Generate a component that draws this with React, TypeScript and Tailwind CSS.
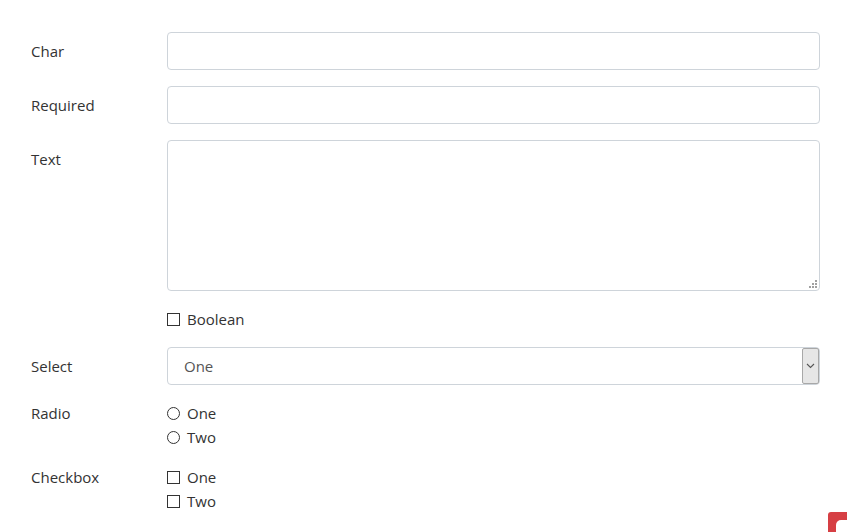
import React from 'react';

const font = { fontFamily: '"Open Sans", "Noto Sans", sans-serif' };

function Label({ children, pad = true }: { children: string; pad?: boolean }) {
  return (
    <div className={`w-[136px] shrink-0 leading-6 ${pad ? 'pt-[7px]' : ''}`}>{children}</div>
  );
}

function Box() {
  return <span className="w-[13px] h-[13px] border border-[#333] bg-white shrink-0" />;
}

function Circle() {
  return <span className="w-[13px] h-[13px] border border-[#333] rounded-full bg-white shrink-0" />;
}

function Option({ kind, children }: { kind: 'box' | 'circle'; children: string }) {
  return (
    <label className="flex items-center gap-[7px] h-6 leading-6">
      {kind === 'box' ? <Box /> : <Circle />}
      <span>{children}</span>
    </label>
  );
}

// dotted resize grip like the one in the screenshot
function Grip() {
  return (
    <svg className="absolute right-[3px] bottom-[3px]" width="9" height="9" viewBox="0 0 9 9">
      <g fill="#a0a0a0">
        <rect x="7" y="1" width="2" height="2" />
        <rect x="4" y="4" width="2" height="2" />
        <rect x="7" y="4" width="2" height="2" />
        <rect x="1" y="7" width="2" height="2" />
        <rect x="4" y="7" width="2" height="2" />
        <rect x="7" y="7" width="2" height="2" />
      </g>
    </svg>
  );
}

export default function App() {
  return (
    <div className="relative h-[532px] overflow-hidden bg-white text-[15px] text-[#333]" style={font}>
      <form className="flex flex-col gap-4 pl-[31px] pt-[32px] w-[820px]">
        <div className="flex">
          <Label>Char</Label>
          <input className="flex-1 h-[38px] border border-[#ced4da] rounded-[4px] px-3 outline-none" />
        </div>
        <div className="flex">
          <Label>Required</Label>
          <input className="flex-1 h-[38px] border border-[#ced4da] rounded-[4px] px-3 outline-none" />
        </div>
        <div className="flex">
          <Label>Text</Label>
          <div className="relative flex-1 flex">
            <textarea className="flex-1 h-[151px] border border-[#ced4da] rounded-[4px] px-3 outline-none resize-none" />
            <Grip />
          </div>
        </div>
        <div className="flex">
          <div className="w-[136px] shrink-0" />
          <Option kind="box">Boolean</Option>
        </div>
        <div className="flex">
          <Label>Select</Label>
          <div className="relative flex-1 h-[38px] border border-[#ced4da] rounded-[4px] flex items-center pl-4 text-[#555]">
            <span>One</span>
            <div className="absolute right-0 top-0 bottom-0 w-[17px] bg-[#e6e6e6] border border-[#a8a8a8] rounded-[2px] flex items-center justify-center">
              <svg width="9" height="6" viewBox="0 0 9 6" fill="none">
                <path d="M1 1l3.5 3.5L8 1" stroke="#555" strokeWidth="1.1" />
              </svg>
            </div>
          </div>
        </div>
        <div className="flex">
          <Label pad={false}>Radio</Label>
          <div className="flex flex-col">
            <Option kind="circle">One</Option>
            <Option kind="circle">Two</Option>
          </div>
        </div>
        <div className="flex">
          <Label pad={false}>Checkbox</Label>
          <div className="flex flex-col">
            <Option kind="box">One</Option>
            <Option kind="box">Two</Option>
          </div>
        </div>
      </form>
      {/* toolbar handle peeking in the corner */}
      <div className="absolute left-[828px] top-[512px] w-10 h-10 bg-[#d63f44] rounded-tl-[3px]">
        <div className="ml-2 mt-2 w-8 h-8 bg-white rounded-tl-[5px]" />
      </div>
    </div>
  );
}
